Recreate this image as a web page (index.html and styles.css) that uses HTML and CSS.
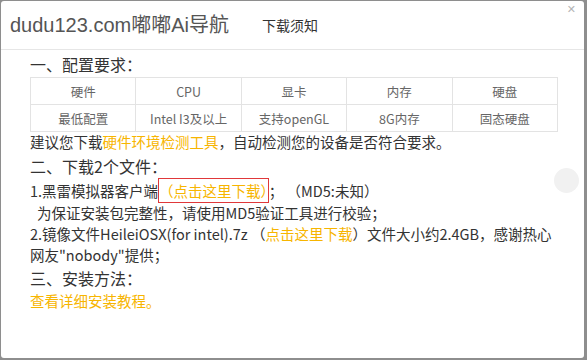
FILE: index.html
```html
<!DOCTYPE html>
<html>
<head>
    <meta charset="UTF-8">
    <title>下载须知</title>
    <link rel="stylesheet" href="styles.css">
</head>
<body>
    <div class="dialog">
        <div class="dialog-head">
            <span class="site-name">dudu123.com嘟嘟Ai导航</span>
            <span class="dialog-title">下载须知</span>
            <span class="close-btn">&#x2715;</span>
        </div>
        <div class="dialog-body">
            <h3 class="section-title first">一、配置要求：</h3>
            <table class="spec-table">
                <tr>
                    <td>硬件</td>
                    <td>CPU</td>
                    <td>显卡</td>
                    <td>内存</td>
                    <td>硬盘</td>
                </tr>
                <tr>
                    <td>最低配置</td>
                    <td>Intel I3及以上</td>
                    <td>支持openGL</td>
                    <td>8G内存</td>
                    <td>固态硬盘</td>
                </tr>
            </table>
            <p class="tip">建议您下载<a class="link" href="#">硬件环境检测工具</a>，自动检测您的设备是否符合要求。</p>

            <h3 class="section-title">二、下载2个文件：</h3>
            <p class="line first-line">1.黑雷模拟器客户端<span class="boxed"><a class="link" href="#">（点击这里下载）</a></span>；&nbsp;（MD5:未知）</p>
            <p class="line indent">为保证安装包完整性，请使用MD5验证工具进行校验；</p>
            <p class="line">2.镜像文件HeileiOSX(for intel).7z （<a class="link" href="#">点击这里下载</a>）文件大小约2.4GB，感谢热心网友"nobody"提供；</p>

            <h3 class="section-title last">三、安装方法：</h3>
            <p class="tip"><a class="link" href="#">查看详细安装教程。</a></p>
        </div>
        <div class="float-btn"></div>
    </div>
</body>
</html>
```

FILE: styles.css
```css
html, body {
    height: 100%;
}

body {
    margin: 0;
    padding: 1px 3px 2px 1px;
    box-sizing: border-box;
    background-color: #8e8e8e;
    font-family: "Noto Sans CJK SC", "Liberation Sans", sans-serif;
    color: #333;
}

.dialog {
    position: relative;
    height: 100%;
    background-color: #fff;
    border-radius: 3px;
    overflow: hidden;
}

.dialog-head {
    display: flex;
    align-items: center;
    height: 48px;
    padding-left: 9px;
    border-bottom: 1px solid #e6e6e6;
}

.site-name {
    font-family: "Liberation Sans", "Noto Sans CJK SC", sans-serif;
    font-size: 20px;
    color: #555;
    margin-right: 33px;
    margin-top: -3px;
}

.dialog-title {
    font-size: 14px;
    color: #333;
}

.close-btn {
    position: absolute;
    top: 2px;
    right: 8px;
    font-family: "DejaVu Sans", sans-serif;
    font-size: 11px;
    color: #b5b5b5;
}

.dialog-body {
    padding: 0 26px 0 29px;
}

.section-title {
    margin: 0;
    font-size: 16px;
    font-weight: normal;
    line-height: 28px;
    color: #333;
}

.section-title.first {
    line-height: 26px;
    padding-top: 1px;
}

.section-title.last {
    line-height: 26px;
}

.spec-table {
    width: 100%;
    border-collapse: collapse;
    table-layout: fixed;
}

.spec-table td {
    height: 26px;
    padding: 0;
    border: 1px solid #e3e3e3;
    text-align: center;
    font-size: 12.5px;
    color: #666;
}

.tip {
    margin: 0;
    font-size: 14.5px;
    line-height: 20px;
}

.line {
    margin: 0;
    font-size: 14.5px;
    line-height: 21px;
}

.first-line {
    line-height: 22px;
}

.indent {
    padding-left: 7px;
}

.link {
    color: #f7b500;
    text-decoration: none;
}

.boxed {
    border: 1px solid #e0383a;
    padding: 1px 0;
}

.float-btn {
    position: absolute;
    top: 167px;
    right: 5px;
    width: 25px;
    height: 25px;
    border-radius: 50%;
    background-color: #f1f1f1;
}
```
